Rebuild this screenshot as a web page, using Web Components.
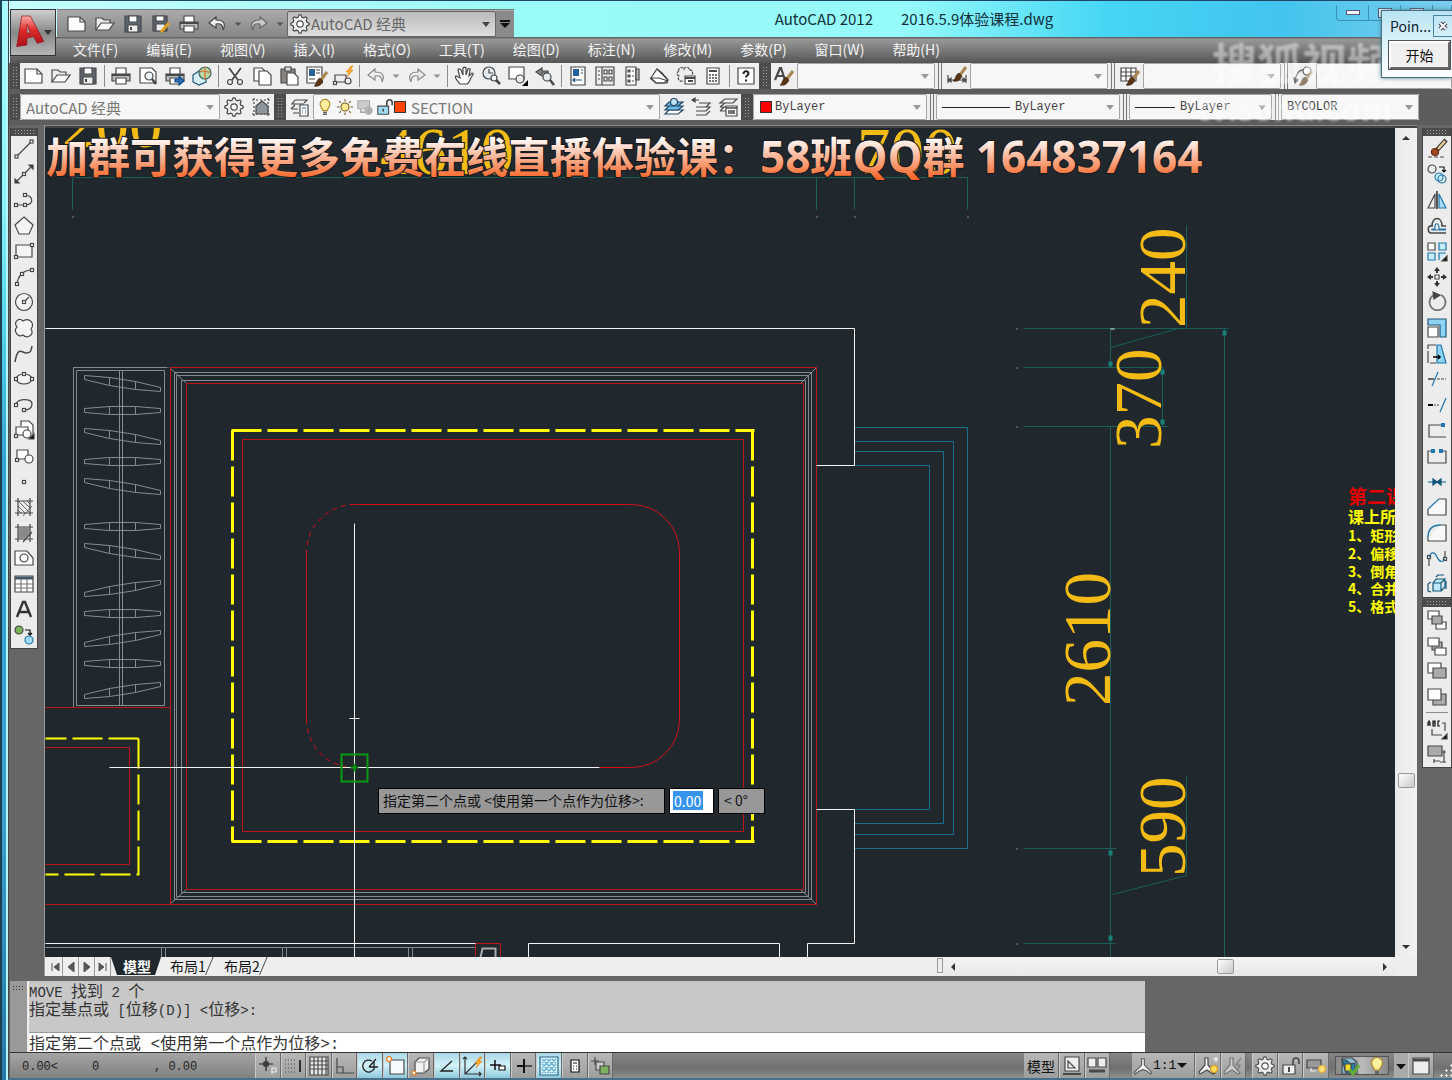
<!DOCTYPE html>
<html lang="zh-CN">
<head>
<meta charset="utf-8">
<title>AutoCAD 2012</title>
<style>
html,body{margin:0;min-height:100%}
body{font-family:"Noto Sans CJK SC",sans-serif;background:#666;overflow:hidden}
</style>
</head>
<body>
<cad-app></cad-app>
<script>
function define(name, render) {
  customElements.define(name, class extends HTMLElement {
    connectedCallback() {
      if (this.shadowRoot) return;
      const t = document.createElement('template');
      t.innerHTML = render(this);
      this.attachShadow({mode: 'open'}).append(t.content.cloneNode(true));
    }
  });
}

/* 20 x 20 icon drawings */
const node = (x, y) => `<rect x="${x-1.5}" y="${y-1.5}" width="3" height="3" fill="#fff"/>`;
const printer = '<path d="M5 8V2h10v6" fill="#fff"/><path d="M1 8h18v7H1z" fill="#bbb"/><path d="M5 12h10v6H5z" fill="#fff"/><path d="M1 9h18" stroke-width="2"/>';
const brush = '<path d="M18 3l-6 8" stroke="#a88652" stroke-width="3"/><path d="M11 9l3 3c-2 5-6 6-9 5 3-2 2-6 6-8z" fill="#5a3515" stroke="#38220f" stroke-width=".6"/>';
const bolt = '<path d="M15 1l-5 6h3l-2 5 6-7h-3l3-4z" fill="#fa2" stroke="#d70" stroke-width=".5"/>';
const gear = (() => {
  let p = '';
  for (let i = 0; i < 32; i++) {
    const r = (i % 4) < 2 ? 9.2 : 7, a = (i - .5) * Math.PI / 16;
    p += (i ? 'L' : 'M') + (10 + r * Math.cos(a)).toFixed(1) + ' ' + (10 + r * Math.sin(a)).toFixed(1);
  }
  return `<path d="${p}z" fill="#eee"/><circle cx="10" cy="10" r="3.2" fill="#fff"/>`;
})();
const bulb = '<path d="M7.500 14c0-2-3-4-3-7a5.500 5.500 0 0 1 11 0c0 3-3 5-3 7z" fill="#fff0a0" stroke="#a98520"/><path d="M8 16h4M8 18h4" stroke="#555" stroke-width="1.500"/>';
const hatchFrame = '<path d="M4 1v18M16 1v18M1 4h18M1 16h18"/>';
const ICONS = {
  new: '<path d="M1 3h12l5 5v9H1z" fill="#fff"/><path d="M13 3v5h5"/>',
  open: '<path d="M1 16V4h6l2 2h6v3" fill="#eee"/><path d="M1 16l5-7h13l-5 7z" fill="#f8f8f8"/>',
  save: '<path d="M2 2h16v16H2z" fill="#5c6670"/><path d="M6 2h8v6H6z" fill="#fff"/><path d="M5 11h10v7H5z" fill="#eee"/><path d="M8 13v3" stroke-width="2"/>',
  saveas: '<path d="M2 2h14v15H2z" fill="#5c6670"/><path d="M5 2h8v5H5z" fill="#fff"/><path d="M5 10h9v7H5z" fill="#eee"/><path d="M18 9l-8 9" stroke="#e4a020" stroke-width="3"/>',
  print: printer,
  preview: '<path d="M2 2h12l4 4v11H2z" fill="#fff"/><circle cx="11" cy="10" r="4" fill="#e8f2f8"/><path d="M14 13l4 5" stroke-width="2.500"/>',
  publish: printer + '<path d="M10 13h4v-3l5 5-5 4v-3h-4z" fill="#2a6fb8" stroke="#124a88"/>',
  dwf: '<path d="M1 9l6-4 7 3v8l-7 3-6-3z" fill="#d4eef6" stroke="#257"/><circle cx="13" cy="7" r="6" fill="#b5d8a4" stroke="#466"/><path d="M13 1v12M8 6c4-3 7 1 10 0" stroke="#d96a30"/>',
  cut: '<path d="M4 2l9 12M16 2L7 14" stroke-width="1.800"/><circle cx="5" cy="16" r="2.500"/><circle cx="15" cy="16" r="2.500"/>',
  copy: '<path d="M2 2h8l3 3v10H2z" fill="#fff"/><path d="M7 5h8l4 4v10H7z" fill="#fff"/>',
  paste: '<path d="M2 3h14v14H2z" fill="#8a8480"/><path d="M6 1h6v4H6z" fill="#ddd"/><path d="M8 7h7l4 4v8H8z" fill="#fff"/>',
  match: '<path d="M1 1h15v16H1z" fill="#fff"/><path d="M3 3h6v7H3z" fill="#2a6396" stroke="none"/><path d="M10 4h4M10 7h4M3 13h6"/><g transform="translate(3 3)">' + brush + '</g>',
  blockedit: '<path d="M2 9h11v7H2z" fill="#eee"/>' + node(2, 17) + '<circle cx="15" cy="15" r="3" fill="#eee"/><g transform="translate(3 -1)">' + bolt + '</g>',
  undo: '<path d="M9 3L2 9l7 5v-4c5-1 7 1 7 6 3-6 1-10-7-10z" fill="#f3f3f3"/>',
  redo: '<path d="M11 3l7 6-7 5v-4c-5-1-7 1-7 6-3-6-1-10 7-10z" fill="#eee"/>',
  tri: '<path d="M5 8h10l-5 5z" fill="#555" stroke="none"/>',
  tridark: '<path d="M3 7h14l-7 8z" fill="#111" stroke="none"/>',
  pan: '<path d="M6 18C3 14 0 11 2 10l4 2-2-8c1-2 2-1 3 0l2 5V2c1-1 2-1 3 0v7l2-6c1-1 3 0 2 1l-1 6 3-3c2 0 1 2 0 3-2 3-2 6-5 8z" fill="#fff"/>',
  zoomrt: '<circle cx="8" cy="7" r="6" fill="#e5edf2"/><path d="M8 3v4h4"/><circle cx="13" cy="12" r="3" fill="#fff"/><path d="M15 14l4 4" stroke-width="2.500"/>',
  zoomwin: '<path d="M1 1h15v12H1z" fill="#fff"/><circle cx="12" cy="13" r="4" fill="#e5edf2"/><path d="M20 14v6h-6z" fill="#000" stroke="none"/>',
  zoomprev: '<path d="M7 2L1 6l6 4V7h6V5H7z" fill="#888"/><circle cx="12" cy="11" r="4" fill="#e5edf2"/><path d="M15 14l4 5" stroke-width="2.500"/>',
  props: '<path d="M3 1h14v18H3z" fill="#fff"/><path d="M5 3h6v7H5z" fill="#225f9b" stroke="none"/><path d="M13 4h2M13 7h2M5 14h9M7 12l-2 2 2 2" stroke="#257"/>',
  dcenter: '<path d="M1 1h18v18H1zM7 1v18" fill="#eee"/><path d="M3 5h2M3 9h2M3 13h2M9 4h3v4H9zM14 4h3v4h-3zM9 11h3v4H9zM14 11h3v4h-3z"/>',
  palettes: '<path d="M4 1h10v18H4z" fill="#fff"/><path d="M6 4h2v2H6zM6 9h2v2H6zM6 14h2v2H6zM10 5h2M10 10h2M10 15h2M14 3h3v11h-3z" fill="#bbb"/>',
  sheets: '<path d="M2 12l6-9 5 4 6 7-4 3H7z" fill="#fff"/><path d="M1 12h9l9 3M1 12l6 5h11l1-3M9 4l9 9" />',
  markup: '<path d="M3 5c-2-3 4-5 5-2 1-3 6-2 5 1 4-1 5 4 2 5M3 5c-3 1-2 5 0 5-2 4 1 6 4 5" stroke-dasharray="3 1"/><path d="M9 10h10v8H9z" fill="#fff"/><path d="M9 12h10M12 15h5" stroke-width="1.800"/>',
  calc: '<path d="M4 2h12v16H4z" fill="#fff"/><path d="M6 5h8" stroke-width="2"/><path d="M6 9h2m1 0h2m1 0h2M6 12h2m1 0h2m1 0h2M6 15h2m1 0h2m1 0h2" stroke-width="1.600"/>',
  help: '<path d="M2 2h16v16H2z" fill="#fff"/><path d="M7.500 8c0-4 5-3 5-.5 0 2-2.500 2-2.500 4M10 13.500v2" stroke-width="2" stroke="#222"/>',
  textstyle: '<path d="M1 14L6 2h1l4 12M3 10h7" stroke-width="2.200"/><g transform="translate(1 2)">' + brush + '</g>',
  dimstyle: '<path d="M1 9v8M19 9v8M1 14h18M1 14l3-2v4zM19 14l-3-2v4z"/><g transform="translate(1 -2)">' + brush + '</g>',
  tablestyle: '<path d="M1 2h15v13H1zM1 6h15M1 10h15M6 2v13M11 2v13" fill="#fff"/><g transform="translate(1 2)">' + brush + '</g>',
  mleader: '<path d="M2 16C3 7 7 3 11 4" fill="none"/><path d="M1 12l1 5 3-3z" fill="#333"/><circle cx="14" cy="5" r="4" fill="#fff"/><g opacity=".6" transform="translate(1 2)">' + brush + '</g>',
  gear,
  geargray: '<g stroke="#555">' + gear + '</g>',
  wsave: '<path d="M3 1v18M17 1v18M1 3h18M1 17h18" stroke-dasharray="2 2"/><path d="M5 9l6-5 6 5v8H5z" fill="#8d949a"/>',
  layerprops: '<path d="M5 3h12l-3 3M5 7h9M1 12h7M3 16h6M5 3L2 7h3M5 8l-4 4"/><path d="M10 8h8v11h-8z" fill="#fff"/><path d="M12 11h4M12 14h1M15 14h1M12 16h1M15 16h1" stroke="#369"/>',
  bulb,
  sun: '<circle cx="10" cy="10" r="4.500" fill="#ffe890" stroke="#765c20"/><path d="M10 1v3M10 16v3M1 10h3M16 10h3M3.500 3.500l2 2M14.500 14.500l2 2M16.500 3.500l-2 2M5.500 14.500l-2 2" stroke="#765c20"/>',
  vpfreeze: '<g stroke="#aaa"><path d="M2 3h13v9H2zM5 12v4h5" fill="#ccc"/><circle cx="14" cy="14" r="4" fill="#bbb"/><path d="M10 14h8M14 10v8"/></g>',
  unlock: '<path d="M12 9V5c0-4 6-4 6 0v3" stroke-width="1.800"/><path d="M2 9h12v9H2z" fill="#9ddcf5"/><path d="M8 12v3" stroke-width="1.800"/>',
  lockgray: '<path d="M12 9V5c0-4 6-4 6 0v3" stroke-width="1.600"/><path d="M2 9h12v9H2z" fill="#eee"/><path d="M8 11v5" stroke-width="2"/>',
  laymake: '<g stroke="#246"><path d="M5 13h14l-5 4H1z" fill="#fff"/><path d="M5 9h14l-5 4H1zM5 5h14l-5 4H1z" fill="#69bde8"/><circle cx="10" cy="5" r="3.500" fill="#bfe6f8"/></g>',
  layprev: '<path d="M1 3h7M1 3l3-2v4z" fill="#222"/><path d="M8 6h11l-4 4H5M8 10h11l-4 4H5M5 18h10l4-4"/>',
  laystate: '<path d="M7 2h12l-4 4H2zM2 10h7M2 14h6M7 6l-5 4M6 10l-4 4"/><path d="M8 9h11v10H8z" fill="#fff"/><path d="M8 11h11M10 14h7M10 16h7" stroke-width="1.500"/>',
  line: '<path d="M3 17L17 3"/>' + node(2.5, 17.5) + node(17.5, 2.5),
  xline: '<path d="M2 18L18 2M1 15v4h4zM19 5V1h-4z" fill="#222"/>' + node(10, 10),
  pline: '<path d="M2 15h9c10 0 8-10 0-10"/>' + node(2, 15) + node(11, 15) + node(11, 5),
  polygon: '<path d="M10 1l9 8-4 9H5L1 9z" fill="#f4f4f4"/>',
  rect: '<path d="M2 4h16v12H2z" fill="#f4f4f4"/>' + node(2, 16) + node(18, 4),
  arc: '<path d="M3 17C4 9 9 3 18 3"/>' + node(3, 17) + node(8, 7) + node(18, 3),
  circle: '<circle cx="10" cy="10" r="8.500" fill="#f4f4f4"/><path d="M10 10l5-5"/>' + node(10, 10),
  cloud: '<path d="M9 3C5-1-1 4 3 9c-4 4 1 11 6 8 4 4 12 0 8-6 4-5-1-12-8-8z" fill="#f4f4f4"/>',
  spline: '<path d="M1 18C4 1 8 9 12 9c5 0 5-2 6-7" stroke-width="1.500"/>',
  ellipse: '<ellipse cx="10" cy="10" rx="8" ry="5" fill="#f4f4f4"/>' + node(2, 10) + node(18, 10) + node(10, 5),
  earc: '<path d="M2 10C1 4 18 2 18 9c0 5-4 6-8 6"/>' + node(2, 10) + node(10, 15),
  insert: '<path d="M7 6V1h8l4 4v11" fill="#fff"/><path d="M2 7h12v8H2z" fill="#fff"/>' + node(2, 16) + '<circle cx="13" cy="14" r="4" fill="#fff"/><path d="M20 14v5h-5z" fill="#000"/>',
  block: '<path d="M3 4h11v9H3z" fill="#fff"/>' + node(3, 14) + '<circle cx="15" cy="13" r="4" fill="#fff"/>',
  point: node(10, 10),
  hatch: hatchFrame + '<path d="M4 4l12 12M4 9l7 7M9 4l7 7M4 13l3 3M13 4l3 3M9 19l9-10" stroke-width=".8"/>',
  gradient: '<path d="M5 5h10v7l-4 3H5z" fill="#888" stroke="#999"/>' + hatchFrame + '<path d="M9 19l9-10"/>',
  region: '<path d="M1 3h12l6 7v7H1z" fill="#fff"/><circle cx="10" cy="10" r="4"/>',
  table: '<path d="M1 2h18v16H1z" fill="#fff"/><path d="M1 4h18" stroke="#456" stroke-width="3"/><path d="M1 10h18M1 14h18M7 5v13M13 5v13" stroke="#777"/>',
  mtext: '<path d="M3 18L9 3h2l6 15M5.500 13h9" stroke="#333" stroke-width="2.400"/>',
  addsel: '<circle cx="5" cy="5" r="4" fill="#7ab55c"/><path d="M11 5h5v5l-2-2M16 10l2-2" stroke="#111"/><circle cx="15" cy="15" r="4" fill="#9ddcf5" stroke="#27a"/>',
  erase: '<path d="M1 18h18" stroke-dasharray="4 2"/><path d="M19 1l-9 10" stroke="#333" stroke-width="4.500"/><path d="M18 2l-7 8" stroke="#e8c890" stroke-width="2.500"/><circle cx="8" cy="13" r="3.500" fill="#a04a22" stroke="#632c12"/>',
  copyobj: '<circle cx="5" cy="5" r="4"/><path d="M12 3h5v5M15 6l2 2 2-2" stroke="#111"/><g stroke="#27a"><circle cx="12" cy="13" r="4" fill="#c8ecfa"/><circle cx="15" cy="15" r="4"/></g>',
  mirror: '<path d="M1 18L8 4v14z"/><path d="M10 1v18" stroke-width="1.800"/><path d="M19 18L12 4v14z" fill="#a6def5" stroke="#27a"/>',
  offset: '<path d="M19 17H5c-5 0-5-8 0-7 0-10 10-10 10 0h4" stroke-width="1.600"/><path d="M19 14H6c-2 0-2-1 0-1h2c-1-7 4-7 4 0h7" stroke="#27a"/>',
  array: '<path d="M1 2h7v7H1z" fill="#fff"/><g stroke="#27a"><path d="M12 2h7v7h-7zM1 12h7v7H1zM12 19v-7h7" fill="#c8ecfa"/></g><path d="M20 15v5h-5z" fill="#000"/>',
  move: '<path d="M8 8h4v4H8z" fill="#fff"/><path d="M10 6V2M10 14v4M6 10H2M14 10h4" stroke="#333" stroke-width="2"/><path d="M7 4l3-4 3 4zM7 16l3 4 3-4zM4 7l-4 3 4 3zM16 7l4 3-4 3z" fill="#333" stroke="none"/>',
  rotate: '<path d="M7 3a8 8 0 1 0 7 0" stroke="#777" stroke-width="1.800"/><path d="M6 0l7 3-6 4z" fill="#444"/>',
  scale: '<path d="M1 1h18v18h-6v-12H1z" fill="#8dd3f4" stroke="#257"/><path d="M1 9h10v10H1z" fill="#fff"/>',
  stretch: '<path d="M9 1H1v18h8" stroke-dasharray="12 2"/><path d="M10 1h4l5 18h-9z" fill="#8dd3f4" stroke="#27a"/><path d="M6 13h7M11 11l2 2-2 2" stroke="#000" stroke-width="1.500"/>',
  trim: '<path d="M1 10h6" stroke-width="1.600"/><path d="M10 10h9" stroke-dasharray="3 1"/><path d="M5 17l6-14" stroke="#27a"/>',
  extend: '<path d="M1 10h5" stroke-width="2" stroke="#000"/><path d="M7 10h5" stroke-dasharray="2 1"/><path d="M13 17l6-14" stroke="#27a"/>',
  breakpt: '<path d="M17 4H2v12h17"/><rect x="14" y="2" width="4" height="4" fill="#27a" stroke="none"/>',
  break: '<path d="M7 5H1v12h18V5h-6"/><path d="M4 3h4v4H4zM12 3h4v4h-4z" fill="#27a" stroke="none"/>',
  join: '<path d="M1 10h18" stroke="#27a"/><path d="M6 7l4 3-4 3zM14 7l-4 3 4 3z" fill="#157" stroke="#157"/>',
  chamfer: '<path d="M12 2h7v16H1v-6" fill="#f8f8f8"/><path d="M1 12L12 2" stroke="#27a"/>',
  fillet: '<path d="M14 2h5v16H1v-4" fill="#f8f8f8"/><path d="M1 14C1 6 6 2 14 2" stroke="#27a" stroke-width="1.500"/>',
  blend: '<path d="M2 17V8M18 2v8"/>' + node(2, 8) + node(18, 10) + '<path d="M2 8c2-6 6-5 8 0s6 6 8 2" stroke="#27a"/>',
  explode: '<g stroke="#157"><path d="M6 9h8v8H6zM6 9l3-4h9l-4 4M18 6v7l-4 4" fill="#bfe8fa"/><path d="M4 8L1 10v7l3 1M9 3l2-2h6M19 7v8"/></g>',
  front: '<path d="M1 1h11v8H1zM9 12h10v7H9z" fill="#fff"/><path d="M5 6h10v8H5z" fill="#aaa"/>',
  back: '<path d="M5 6h10v8H5z" fill="#aaa"/><path d="M1 2h11v8H1zM8 12h11v7H8z" fill="#fff"/>',
  above: '<path d="M1 2h13v10H1z" fill="#fff"/><path d="M6 7h13v10H6z" fill="#aaa"/>',
  under: '<path d="M6 7h13v11H6z" fill="#aaa"/><path d="M1 2h13v11H1z" fill="#fff"/>',
  abc: '<path d="M1 7V4l1-2 1 2v3M1 5h2M6 2v5h2V2zM6 4h2M13 2h-2v5h2" stroke="#111"/><path d="M15 4h3v8M5 10v6h10"/><path d="M20 15v5h-5z" fill="#000"/>',
  annofront: '<path d="M1 2h14v10H1z" fill="#aaa"/><path d="M17 6v12M13 18h6M7 15v4M7 17h6M15 8h4"/>',
  infer: '<path d="M1 8h14M8 1v14" stroke="#222"/><path d="M6 6h4v4H6z" stroke="#222"/><path d="M14 18v-6h4v4h-4" stroke="#eee"/>',
  snap: '<path d="M2 4h12M2 8h12M2 12h12M2 16h12" stroke-dasharray="1 2"/><path d="M17 4v12" stroke="#111" stroke-width="1.600"/>',
  grid: '<path d="M1 1h18v18H1z" fill="#e8e8e8"/><path d="M1 5h18M1 9h18M1 13h18M5 1v18M9 1v18M13 1v18M17 1v18"/>',
  ortho: '<path d="M2 2v15h17M2 11h6v6"/>',
  polar: '<path d="M12 5a6 6 0 1 0 2 8M9 11h9M9 11l7-8M14 5v9" stroke="#222" stroke-width="1.300"/>',
  osnap: '<path d="M4 4h14v14H4z" fill="#f5fbff"/><circle cx="3" cy="3" r="2.500" stroke="#e87818" fill="#fff"/>',
  osnap3d: '<path d="M4 6l4-4h10v11l-5 4H4z" fill="#f2f2f2"/><path d="M4 6h9v11M13 6l5-4" stroke="#999"/><circle cx="3" cy="17" r="2" stroke="#e87818" fill="#fff"/>',
  otrack: '<path d="M15 5L4 15h12" stroke="#222" stroke-width="1.300"/>',
  ducs: '<path d="M3 1v17h16M3 18L15 6M1 3l2-2 2 2M17 16l2 2-2 2" stroke="#333"/><g transform="translate(3 0)">' + bolt + '</g>',
  dyn: '<path d="M2 9h11M7 4v10" stroke="#111" stroke-width="1.500"/><path d="M11 10h6v4h-6z" fill="#fff" stroke="#111"/>',
  lwt: '<path d="M10 10h8" stroke="#111"/><path d="M10 3v14M3 10h7" stroke="#111" stroke-width="2"/>',
  tpy: '<path d="M1 1h18v18H1z" fill="#dff4fc" stroke="#268"/><path d="M3 3l14 14M3 8l9 9M8 3l9 9M3 13l4 4M13 3l4 4M17 3L3 17M12 3l-9 9M17 8l-9 9M7 3L3 7M17 13l-4 4" stroke="#5aaed2"/>',
  qp: '<path d="M6 4h8v12H6z" fill="#fff" stroke="#111"/><path d="M8 7h4M8 10h1M11 10h1M8 13h1M11 13h1" stroke="#111"/>',
  sc: '<path d="M1 5h8M5 1v8"/><path d="M6 6h8v8H6z" fill="#ccc"/><path d="M10 10h9v8h-9z" fill="#7fb25c"/>',
  layout: '<path d="M3 1h14v14H3z" fill="#eee"/><path d="M6 5v7h7z"/><path d="M1 18h18" stroke-width="2"/>',
  qview: '<path d="M1 2h8v9H1zM11 2h8v9h-8z" fill="#eee"/><path d="M2 15h16" stroke-width="3"/>',
  anno: '<path d="M8.500 2h3v7l8 8-1 2c-3-3-5-4-8.500-5-3.500 1-5.500 2-8.500 5l-1-2 8-8z" fill="#f4f4f4" stroke="#555"/>',
  annovis: '<path d="M7 2h3v7l7 8-2 1-6-4-7 4-1-2 6-7z" fill="#f4f4f4"/><circle cx="16" cy="13" r="3.500" fill="#ffd95a" stroke="#d79a22"/><path d="M18 1v5M15 3h5" stroke="#fff"/>',
  annoauto: '<g stroke="#777"><path d="M7 2h3v7l7 8-2 1-6-4-7 4-1-2 6-7z" fill="#ccc"/><path d="M18 2l-5 7h4l-3 6"/></g>',
  tray: '<path d="M1 4h14v8H1z" fill="#999"/><path d="M5 12v3h5" stroke="#eee"/><circle cx="16" cy="13" r="3.500" fill="#ffe07a" stroke="#e5a933"/>',
  xref: '<path d="M2 2h10l5 4v12H2z" fill="#8ab9d8"/><path d="M2 4c8-2 4 6 13 3v10H6z" fill="#287ea8"/><path d="M5 8h6v7H5z" fill="#f5dc30"/><path d="M10 14l3 4 6-9" stroke="#5fae30" stroke-width="3"/>',
  clean: '<path d="M2 2h16v16H2z" fill="#eee"/><path d="M2 4h16" stroke-width="3"/>',
  logo: '<defs><linearGradient id="g" x2="0" y2="1"><stop stop-color="#f9b0a8"/><stop offset=".45" stop-color="#e02b2b"/><stop offset="1" stop-color="#a81018"/></linearGradient></defs><path d="M4 0h5l8 15-4 1-2-4-4 1v4l-6 1z" fill="url(#g)" stroke="#8d1218" stroke-width=".4"/><path d="M7 10V5l2 5z" fill="#aaa" stroke="#821" stroke-width=".4"/>'
};

define('cad-icon', el => `
<style>:host{display:block;width:20px;height:20px;flex:none}svg{display:block;width:100%;height:100%;overflow:visible}</style>
<svg viewBox="0 0 20 20" fill="none" stroke="#484848" stroke-width="1.200" aria-hidden="true">${ICONS[el.getAttribute('name')] || ''}</svg>`);

/* icon button; modifiers: narrow, side, status, on, dim */
define('cad-tool', el => `
<style>
:host{display:flex;flex:none;width:27px}
:host([narrow]){width:14px}
:host([side]){width:auto;flex:1}
:host([status]){width:auto;flex:1 0 0}
button{all:unset;flex:1;display:flex;align-items:center;justify-content:center;min-width:0;cursor:pointer}
:host([status]) button{background:linear-gradient(#b8b8b8,#9d9d9d);border-right:1px solid #6a6a6a;border-left:1px solid #cacaca}
:host([status][on]) button{background:linear-gradient(#a9d8e6,#d3f2fa,#8cc9da)}
:host([dim]) button{opacity:.6}
:host([narrow]) cad-icon{width:14px;height:14px}
</style>
<button type="button" aria-label="${el.getAttribute('label') || ''}"><cad-icon name="${el.getAttribute('icon')}"></cad-icon></button>`);

define('cad-sep', () => `<style>:host{display:flex;flex:none;width:6px;justify-content:center;padding:2px 0}i{width:1px;background:#8c8c8c}
:host([wide]){width:9px;padding:0}:host([wide]) i{border:1px solid #777;border-width:0 1px;width:2px;background:#eee}
:host([across]){width:auto;height:6px;padding:0 3px;align-items:center}:host([across]) i{flex:1;height:1px;width:auto}</style><i></i>`);

define('cad-grip', () => `<style>:host{display:flex;flex:none;width:10px;box-sizing:border-box;padding:3px 2px;background:#4c4c4c}
i{flex:1;background:radial-gradient(circle,#a5a5a5 30%,transparent 40%) 0 0/3px 3px}
:host([gap]){width:12px;padding:3px}:host([across]){width:auto;height:8px;padding:1px 3px}</style><i></i>`);

define('cad-group', () => `<style>:host{display:flex;background:#efefef;height:26px;flex:none;align-items:stretch}:host([fill]){flex:1}</style><slot></slot>`);

define('cad-combo', el => `
<style>
:host{display:flex;position:relative;align-items:center;box-sizing:border-box;background:#f7f7f7;border:1px solid #a5a5a5;border-radius:2px;flex:none;overflow:hidden}
select{appearance:none;border:0;background:transparent;flex:1;min-width:0;align-self:stretch;padding:0 16px 0 var(--indent,5px);margin:0;font:inherit;color:inherit;outline:0}
:host::after{content:"";position:absolute;right:5px;top:10px;border:4px solid transparent;border-top:5px solid var(--arrow,#999);border-bottom:0}
</style>
<slot></slot><select aria-label="${el.getAttribute('label')}"><option>${el.getAttribute('value') || ''}</option></select>`);

define('cad-titlebar', () => `
<style>
:host{display:grid;grid-template-columns:47px 1fr;grid-template-rows:28px 26px;padding:9px 0 0 1px;background:linear-gradient(90deg,#c6ffff,#9afaf7 35%,#96fafa 62%,#45d6f5 76%,#42c4ee 88%,#7bcdec)}
.app{all:unset;box-sizing:border-box;grid-column:1;grid-row:1/3;align-self:start;height:47px;margin-right:1px;border:1px solid #333;background:linear-gradient(#cfcfcf,#888 50%,#b5b5b5);display:flex;align-items:center;justify-content:space-between;padding:0 3px 0 4px;z-index:1}
.app cad-icon{width:34px;height:38px;margin-right:-6px}
.app::after{content:"";border:4px solid transparent;border-top:5px solid #333;border-bottom:0}
.row{display:flex;min-width:0}
.qat{display:flex;align-items:center;background:linear-gradient(#aaa,#868686);width:457px;box-sizing:border-box;padding-left:6px;border-top:1px solid #777}
.qat cad-tool{width:28px}.qat cad-tool[narrow]{width:14px}
.qat cad-combo{margin-left:auto;width:209px;height:26px;background:linear-gradient(#bbb,#dedede);border-color:#666;color:#666;font-size:15px;--arrow:#444;--indent:1px}
.qat cad-combo cad-icon{margin-left:2px}
.more{all:unset;width:18px;height:26px;display:flex;flex-direction:column;align-items:center;justify-content:center;gap:1px;background:#8a8a8a}
.more::before{content:"";width:10px;height:2px;background:#111}
.more::after{content:"";border:5px solid transparent;border-top-color:#111;border-bottom:0}
h1{flex:1;margin:0;font:15px/19px "Noto Sans CJK SC",sans-serif;color:#123038;display:flex;justify-content:center;gap:28px;padding-right:22px;white-space:nowrap}
.win{display:flex;width:116px;height:16px;margin-top:-4px;border:1px solid #3a92b5;border-top:0;border-radius:0 0 4px 4px;box-sizing:border-box}
.win button{all:unset;width:31px;display:flex;align-items:center;justify-content:center;border-right:1px solid #3a92b5}
.win i{width:14px;height:5px;background:#fff;border:1px solid #557;box-sizing:border-box}
.win .mx{height:10px}
nav{grid-column:1/3;grid-row:2;display:flex;gap:28px;padding:0 0 2px 63px;background:linear-gradient(#666 0 1px,#999 2px,#7a7a7a 50%,#555);align-items:center}
nav a{color:#f4f4f4;text-decoration:none;font-size:14px;line-height:20px;white-space:nowrap}
</style>
<button class="app" type="button" aria-label="应用程序菜单"><cad-icon name="logo"></cad-icon></button>
<div class="row">
 <div class="qat">
  <cad-tool icon="new" label="新建"></cad-tool><cad-tool icon="open" label="打开"></cad-tool><cad-tool icon="save" label="保存"></cad-tool><cad-tool icon="saveas" label="另存为"></cad-tool><cad-tool icon="print" label="打印"></cad-tool><cad-tool icon="undo" label="放弃"></cad-tool><cad-tool narrow icon="tri" label="放弃列表"></cad-tool><cad-tool dim icon="redo" label="重做"></cad-tool><cad-tool narrow icon="tri" label="重做列表"></cad-tool>
  <cad-combo label="工作空间" value="AutoCAD 经典"><cad-icon name="gear"></cad-icon></cad-combo><button class="more" type="button" aria-label="自定义"></button>
 </div>
 <h1><span>AutoCAD 2012</span><span>2016.5.9体验课程.dwg</span></h1>
 <div class="win"><button type="button" aria-label="最小化"><i></i></button><button type="button" aria-label="最大化"><i class="mx"></i></button><button type="button" aria-label="关闭"><i class="mx"></i></button></div>
</div>
<nav>${['文件(F)','编辑(E)','视图(V)','插入(I)','格式(O)','工具(T)','绘图(D)','标注(N)','修改(M)','参数(P)','窗口(W)','帮助(H)'].map(t => `<a href="#">${t}</a>`).join('')}</nav>`);

const tools = (list, attr = '') => list.split(' ').map(n => n === '|' ? `<cad-sep ${attr === 'side' ? 'across' : ''}></cad-sep>` : `<cad-tool ${attr} icon="${n}" label="${n}"></cad-tool>`).join('');

define('cad-toolbars', () => `
<style>
:host{display:flex;flex-direction:column;gap:5px;background:#5d5d5d;padding-bottom:5px}
.r{display:flex;padding-left:1px;overflow:hidden}
.s{width:138px}.ic{width:26px}
.ws{width:200px;font-size:15px;color:#777}
.ly{width:347px;font-size:15px;color:#777}
.ly cad-icon{width:18px;height:18px;margin-left:2px}
.sw{width:10px;height:10px;border:1px solid #333;background:#f40;flex:none}
.by{font:12px "Liberation Mono",monospace;color:#444}
.c1{width:174px;--indent:3px}.c1 .sw{background:#f00;margin-left:6px}.c2{width:184px}.c3{width:143px}.c4{width:138px}
.ln{height:1px;background:#222;flex:none;margin-left:5px;width:68px}.ln.b{width:40px}
.fill{flex:1}
</style>
<div class="r"><cad-grip></cad-grip><cad-group>${tools('new open save | print preview publish dwf | cut copy paste match blockedit |')}<cad-tool dim icon="undo" label="放弃"></cad-tool><cad-tool dim narrow icon="tri" label="列表"></cad-tool><cad-tool dim icon="redo" label="重做"></cad-tool><cad-tool dim narrow icon="tri" label="列表"></cad-tool>${tools('| pan zoomrt zoomwin zoomprev | props dcenter palettes sheets markup calc | help')}</cad-group><cad-grip gap></cad-grip>
<cad-group fill>
<cad-tool class="ic" icon="textstyle" label="文字样式"></cad-tool><cad-combo class="s" label="文字样式"></cad-combo><cad-sep wide></cad-sep>
<cad-tool class="ic" icon="dimstyle" label="标注样式"></cad-tool><cad-combo class="s" label="标注样式"></cad-combo><cad-sep wide></cad-sep>
<cad-tool class="ic" icon="tablestyle" label="表格样式"></cad-tool><cad-combo class="s" label="表格样式"></cad-combo><cad-sep wide></cad-sep>
<cad-tool class="ic" icon="mleader" label="多重引线样式"></cad-tool><cad-combo class="fill" label="多重引线样式"></cad-combo></cad-group></div>
<div class="r"><cad-grip></cad-grip><cad-group><cad-combo class="ws" label="工作空间" value="AutoCAD 经典"></cad-combo>${tools('gear wsave')}</cad-group><cad-grip gap></cad-grip>
<cad-group><cad-tool icon="layerprops" label="图层特性"></cad-tool><cad-combo class="ly" label="图层" value="SECTION"><cad-icon name="bulb"></cad-icon><cad-icon name="sun"></cad-icon><cad-icon name="vpfreeze"></cad-icon><cad-icon name="unlock"></cad-icon><span class="sw"></span></cad-combo>${tools('laymake layprev laystate')}</cad-group><cad-grip gap></cad-grip>
<cad-group class="by"><cad-combo class="c1" label="颜色" value="ByLayer"><span class="sw"></span></cad-combo><cad-sep wide></cad-sep>
<cad-combo class="c2" label="线型" value="ByLayer"><span class="ln"></span></cad-combo><cad-sep wide></cad-sep>
<cad-combo class="c3" label="线宽" value="ByLayer"><span class="ln b"></span></cad-combo><cad-sep wide></cad-sep>
<cad-combo class="c4" label="打印样式" value="BYCOLOR"></cad-combo></cad-group></div>`);

define('cad-sidebar', () => `
<style>:host{display:flex;flex-direction:column;background:#ececec;border:1px solid #444;border-width:0 1px 1px;box-sizing:border-box}div{display:flex;flex-direction:column;height:var(--h)}</style>
<cad-grip across></cad-grip><div><slot></slot></div>`);

/* the drawing on the model canvas */
function hanger(y, s) {
  const a = -s * 6, b = s * 6;
  return `<path d="M84 ${y+a-2}L109 ${y+a/3-4}L135 ${y+b/3-4}L160 ${y+b-2}V${y+b+2}L135 ${y+b/3+4}L109 ${y+a/3+4}L84 ${y+a+2}zM109 ${y+a/3-4}v8M135 ${y+b/3-4}v8"/>`;
}
define('cad-canvas', () => `
<style>
:host{display:block;position:relative;background:#20282e;overflow:hidden;flex:1;min-width:0}
svg{position:absolute;inset:0;width:100%;height:100%}
.dim{font-family:"Liberation Serif",serif;font-size:67px;fill:#f3bb14}
.banner{font:bold 42px "Noto Sans CJK SC",sans-serif;fill:url(#bg);stroke:#18191c;stroke-width:2px;paint-order:stroke}
.latin{font-family:"Open Sans","Noto Sans CJK SC",sans-serif;font-size:44px}
.mid{font-family:"Noto Sans CJK TC",sans-serif}
.note{font:bold 14px "Noto Sans CJK SC",sans-serif;fill:#ff0}
.dyn{position:absolute;left:333px;top:660px;display:flex;gap:4px;align-items:flex-start;font-size:14px;color:#111}
.dyn>*{box-sizing:border-box;border:1px solid #000;background:#989898;height:26px;line-height:22px;white-space:nowrap;margin:0}
label{width:287px;height:28px;padding-left:4px}
.dyn input{width:45px;font:14px "Noto Sans CJK SC",sans-serif;color:#fff;padding:0 4px;background:linear-gradient(#3794ee,#3794ee) 3px 2px/30px 19px no-repeat,#fff;outline:0}
.dyn span{width:47px;padding-left:5px}
</style>
<svg role="img" aria-label="图形"><defs><linearGradient id="bg" gradientUnits="userSpaceOnUse" x1="0" y1="138" x2="0" y2="178"><stop stop-color="#fff"/><stop offset=".45" stop-color="#fbb99c"/><stop offset="1" stop-color="#f7682b"/></linearGradient></defs>
<g transform="translate(-44.500 -127.500)" fill="none" stroke-width="1">
<g stroke="#19605a"><path d="M72 177H968M72 177V209M816 177V209M854 177V209M967 177V209M1023 328H1228M1023 367H1163M1023 426H1167M1023 848H1116M1023 943H1115M1110 328V367M1110 426V957M1162 367V426M1186 225V327M1224 328V957M1186 776V875M1110 347L1178 328M1186 875L1112 894"/></g>
<g fill="#178078"><path d="M1108 361h4v5h-4zM1160 369h4v5h-4zM1160 419h4v5h-4zM1108 850h4v5h-4zM1108 935h4v5h-4zM1222 330h4v5h-4z"/></g>
<path fill="#ddd" d="M72 216h1v1h-1zM816 216h1v1h-1zM854 216h1v1h-1zM967 216h1v1h-1zM1016 328h1v1h-1zM1016 367h1v1h-1zM1016 426h1v1h-1zM1016 848h1v1h-1zM1016 943h1v1h-1zM1110 328h4v1h-4z"/>
<path stroke="#16708f" d="M854 427H967V848H854M854 441H953V834H854M854 451H943V823H854M854 465H929V809H854"/>
<g stroke="#858c8f"><path d="M73 707V367H167M76 370H164V705H76zM119 370V705M122 370V705"/><path d="M174 372H811V899H174zM176 375H808V896H176zM181 380H805V892H181z"/><path d="M169 367L186 383M816 367L800 383M169 904L186 889M816 904L800 889"/><g>${[[383,1],[410,0],[436,1],[461,0],[486,1],[526,0],[551,1],[588,-1],[613,0],[638,-1],[663,0],[690,-1]].map(h => hanger(...h)).join('')}</g><path d="M45 947H475M161 947V957M165 947V957M282 947V957M286 947V957M408 947V957M412 947V957"/></g>
<g stroke="#bb171d"><path d="M45 707H170M170 367H816V904H45M170 367V904M186 383H803V889H186zM242 439H743V831H242zM45 747H129V864H45M475 957V943H500V957"/></g>
<path stroke="#aaa" stroke-width="2" d="M480 957L482 948H495V957"/>
<g stroke="#d41118"><path d="M354 504H631A48 48 0 0 1 679 552V719A48 48 0 0 1 631 767H599M306 552V719"/><path stroke-dasharray="5 4" d="M354 504A48 48 0 0 0 306 552M306 719A48 48 0 0 0 354 767"/></g>
<g stroke="#ff0" stroke-width="3"><path stroke-dasharray="30 6" d="M231 430H754M231 841H754"/><path stroke-dasharray="30 6" d="M232 430V841M752 430V841"/><path stroke-width="2" stroke-dasharray="30 6" d="M138 738H45M138 738V874H45"/></g>
<g stroke="#f4f4f4"><path d="M45 328H854V465H816M816 809H854V943H807V957M45 943H475M528 957V943H779V957"/><path d="M354 523V957M109 767H599M349 718H359"/></g>
<path stroke="#0a9a12" stroke-width="2" d="M341 754H367V781H341zM350 767H358M354 763V771"/>
</g>
<g transform="translate(-45 -128)">
<g class="dim"><text x="62" y="147">200</text><text x="380" y="174">4610</text><text x="857" y="174">700</text>
<text transform="translate(1185 328) rotate(-90)">240</text><text transform="translate(1161 449) rotate(-90)">370</text><text transform="translate(1110 706) rotate(-90)">2610</text><text transform="translate(1185 877) rotate(-90)">590</text></g>
<g class="note"><text x="1348" y="504" style="font-size:19px;fill:#e00000">第二课</text><text x="1348" y="523" style="font-size:16px">课上所用</text><text x="1348" y="541">1、矩形</text><text x="1348" y="559">2、偏移</text><text x="1348" y="577">3、倒角</text><text x="1348" y="594">4、合并</text><text x="1348" y="612">5、格式</text></g>
<text class="banner" x="46" y="173">加群可获得更多免费在线直播体验课<tspan class="mid">：</tspan><tspan class="latin">58</tspan>班<tspan class="latin">QQ</tspan>群<tspan class="latin"> 164837164</tspan></text>
</g></svg>
<div class="dyn"><label for="d">指定第二个点或 &lt;使用第一个点作为位移&gt;:</label><input id="d" value="0.00"><span>&lt; 0°</span></div>`);

define('cad-scroll', el => {
  const h = el.hasAttribute('horizontal');
  const [a, b] = el.getAttribute('at').split(' ');
  return `<style>
:host{display:flex;flex-direction:${h ? 'row' : 'column'};align-items:center;background:linear-gradient(${h ? 0 : 90}deg,#e9e9e9,#f3f3f3);${h ? 'flex:1' : 'width:22px'}}
button{all:unset;width:20px;height:20px;display:flex;align-items:center;justify-content:center;flex:none}
svg{width:8px;height:8px}
.t{box-sizing:border-box;width:17px;height:15px;border:1px solid #999;border-radius:2px;background:linear-gradient(135deg,#fff,#c9c9c9);flex:none}
.a{flex:${a}}.b{flex:${b}}</style>
<button type="button" aria-label="上一个"><svg viewBox="0 0 8 8"><path fill="#333" d="${h ? 'M6 0v8L2 4z' : 'M0 6h8L4 2z'}"/></svg></button><span class="a"></span><span class="t"></span><span class="b"></span><button type="button" aria-label="下一个"><svg viewBox="0 0 8 8"><path fill="#333" d="${h ? 'M2 0v8l4-4z' : 'M0 2h8L4 6z'}"/></svg></button>`;
});

define('cad-view', () => `
<style>
:host{display:flex;flex-direction:column;flex:1;min-width:0;border-left:1px solid #999;border-top:1px solid #888;box-shadow:inset 0 2px #444}
.m{display:flex;flex:1;margin-top:2px;min-height:0}
.b{display:flex;height:19px;background:#eee;flex:none}
.n{display:flex;padding-left:2px}.n button{all:unset;width:16px;display:flex;align-items:center;justify-content:center;border-right:1px solid #999;box-sizing:border-box}
.n svg{width:10px;height:10px}
.tab{all:unset;font-size:14px;line-height:18px;color:#111;height:18px;box-sizing:border-box;white-space:nowrap;width:54px;text-align:center;background:linear-gradient(113deg,transparent 47px,#555 48px,transparent 49px)}
.tab.on{width:50px;background:#20282e;color:#fff;clip-path:polygon(0 0,100% 0,88% 100%,12% 100%);font-weight:bold;padding-left:2px}
.sp{flex:664 0 0}
.split{width:4px;border:1px solid #999;margin:1px 0 3px}
.c{width:22px}
.h2{flex:455 0 0;display:flex;align-items:stretch}
</style>
<div class="m"><cad-canvas></cad-canvas><cad-scroll at="624 149"></cad-scroll></div>
<div class="b"><div class="n">${['M2 1v8M9 1v8L4 5z','M8 0v10L2 5z','M2 0v10l6-5z','M8 1v8M1 1v8l5-4z'].map(d => `<button type="button" aria-label="切换布局"><svg viewBox="0 0 10 10"><path d="${d}" fill="#555" stroke="#555"/></svg></button>`).join('')}</div>
<button class="tab on" type="button">模型</button><button class="tab" type="button">布局1</button><button class="tab" type="button">布局2</button>
<span class="sp"></span><div class="h2"><span class="split"></span><cad-scroll horizontal at="257 142"></cad-scroll></div><span class="c"></span></div>`);

define('cad-command', () => `
<style>
:host{display:flex;margin:5px 0 0 1px;width:79%;max-width:1135px;height:71px;font-size:16px;color:#333;flex:none}
.g{width:17px;background:#999;padding-top:4px;box-sizing:border-box}.g::before{content:"";display:block;margin:0 2px;height:6px;background:radial-gradient(circle,#333 35%,transparent 40%) 0 0/3px 3px}
.c{flex:1;display:flex;flex-direction:column;background:#c8c8c8;border-left:2px solid #eee}
p{margin:0;line-height:18px;height:18px;white-space:pre}
b{font:14px/1px "Liberation Mono",monospace}
input{margin-top:auto;box-sizing:border-box;height:20px;border:0;border-top:1px solid #999;padding:0 0 2px;background:#fff;font:16px/17px "Liberation Mono","Noto Sans CJK SC",monospace;color:#333;outline:0}
</style>
<div class="g"></div><div class="c"><p><b>MOVE </b>找到<b> 2 </b>个</p><p>指定基点或<b> [</b>位移<b>(D)] &lt;</b>位移<b>&gt;:</b></p><input aria-label="命令" value="指定第二个点或 &lt;使用第一个点作为位移&gt;:"></div>`);

define('cad-status', () => `
<style>
:host{display:flex;height:26px;border-top:1px solid #333;box-sizing:border-box;margin-left:1px;background:linear-gradient(#868686,#707070 60%,#8e8e8e);color:#222;flex:none}
.xy{font:12px/28px "Liberation Mono",monospace;width:245px;box-sizing:border-box;padding-left:12px;white-space:pre;display:flex;background:linear-gradient(#a5a5a5,#808080)}
.xy span:nth-child(1){width:70px}.xy span:nth-child(2){width:62px}
.g{display:flex}.t{width:358px}.r{margin-left:auto;display:flex}
button{all:unset;box-sizing:border-box;font-size:14px;line-height:24px;padding:0 3px;background:linear-gradient(#b8b8b8,#9d9d9d);border-right:1px solid #6a6a6a;color:#111}
.sc{display:flex;align-items:center;width:63px;font:13px/24px "Liberation Mono",monospace;gap:1px;padding:0 2px}
.sc cad-icon{width:18px;height:18px}
.sc::after{content:"";border:5px solid transparent;border-top-color:#111;border-bottom:0}
.tr{display:flex;width:54px;margin:3px 5px 3px 6px;background:linear-gradient(90deg,#888,#bbb,#888);border:1px solid #555;box-sizing:border-box}
.w1{width:26px}.w2{width:51px}.w3{width:77px}.gap{width:22px}.gap.n{width:6px}
cad-tool[narrow]{background:#aaa}
.rs{width:18px;background:radial-gradient(circle,#ddd 35%,transparent 40%) 0 0/5px 5px;clip-path:polygon(100% 40%,100% 100%,10% 100%)}
</style>
<div class="xy"><span>0.00&lt;</span><span>0</span><span>, 0.00</span></div>
<div class="g t">${'infer snap grid ortho polar* osnap* osnap3d otrack* ducs* dyn* lwt tpy* qp sc'.split(' ').map(n => `<cad-tool status ${n.endsWith('*') ? 'on' : ''} icon="${n.replace('*', '')}" label="${n.replace('*', '')}"></cad-tool>`).join('')}</div>
<div class="r"><button type="button">模型</button><div class="g w2">${tools('layout qview', 'status')}</div><span class="gap"></span>
<button type="button" class="sc"><cad-icon name="anno"></cad-icon>1:1</button><div class="g w2">${tools('annovis annoauto', 'status')}</div><span class="gap n"></span>
<div class="g w3">${tools('geargray lockgray tray', 'status')}</div><div class="tr">${tools('xref bulb')}</div><cad-tool narrow icon="tridark" label="托盘菜单"></cad-tool><div class="g w1">${tools('clean', 'status')}</div><span class="rs"></span></div>`);

define('cad-float', () => `
<style>
:host{display:block;box-sizing:border-box;width:71px;background:linear-gradient(#b8e4f4,#e6f6fb 40px,#fff);border:1px solid #49717f;border-right:0;box-shadow:0 0 4px #4a7a8a;overflow:hidden}
header{display:flex;justify-content:space-between;align-items:center;height:29px;padding-left:8px;font-size:14px;color:#123}
header button{all:unset;width:18px;height:20px;border:1px solid #47869c;border-right:0;display:flex;align-items:center;justify-content:center}
.s{all:unset;box-sizing:border-box;display:block;margin:1px 0 8px 7px;width:61px;height:28px;background:#f0f0f0;border:2px solid #666;border-top-color:#fff;border-left-color:#fff;outline:1px solid #555;text-align:center;font-size:14px;line-height:24px;color:#111}
</style><header><span>Poin...</span><button type="button" aria-label="关闭"><svg width="10" height="10" viewBox="0 0 10 10"><path d="M2 2l6 6M8 2L2 8" stroke="#445" stroke-width="4"/><path d="M2 2l6 6M8 2L2 8" stroke="#fff" stroke-width="2"/></svg></button></header><button type="button" class="s">开始</button>`);

define('cad-app', () => `
<style>
:host{display:flex;box-sizing:border-box;min-height:100vh;position:relative;background:#666;overflow:hidden;border-top:1px solid #246}
.edge{width:8px;flex:none;box-sizing:border-box;border-left:2px solid #1c4250;border-right:2px solid #b5f5fa;background:linear-gradient(#a5ffff,#8ef5f8 18%,#5bd9ee 28%,#35a5d5 42%,#3aa0d2 75%,#2478aa)}
.col{flex:1;display:flex;flex-direction:column;min-width:0;border-left:1px solid #444;border-bottom:2px solid #47708c;margin-top:-1px}
main{flex:1;display:flex;background:#666;min-height:0}
.side{flex:none;display:flex;flex-direction:column;gap:1px;padding-top:3px}
.l{width:28px;margin:0 6px 0 1px}.r{width:30px;margin-left:5px}
cad-view{flex:1}
cad-float{position:absolute;right:0;top:9px;z-index:3}
.wm{position:absolute;right:60px;top:37px;z-index:2;text-align:right;color:#fff;opacity:.45;pointer-events:none;font:bold 45px/50px "Noto Sans CJK SC",sans-serif;filter:blur(1px)}
.wm small{display:block;font:bold 32px/42px "Open Sans",sans-serif}
</style>
<div class="edge"></div>
<div class="col"><cad-titlebar></cad-titlebar><cad-toolbars></cad-toolbars>
<main><div class="side l"><cad-sidebar style="--h:512px">${tools('line xline pline polygon rect arc circle cloud spline ellipse earc insert block point hatch gradient region table mtext addsel', 'side')}</cad-sidebar></div>
<cad-view></cad-view>
<div class="side r"><cad-sidebar style="--h:461px">${tools('erase copyobj mirror offset array move rotate scale stretch trim extend breakpt break join chamfer fillet blend explode', 'side')}</cad-sidebar><cad-sidebar style="--h:160px">${tools('front back above under | abc annofront', 'side')}</cad-sidebar></div></main>
<cad-command></cad-command><cad-status></cad-status></div>
<div class="wm">搜狐视频<small>tv.sohu.com</small></div>
<cad-float></cad-float>`);
</script>
</body>
</html>
